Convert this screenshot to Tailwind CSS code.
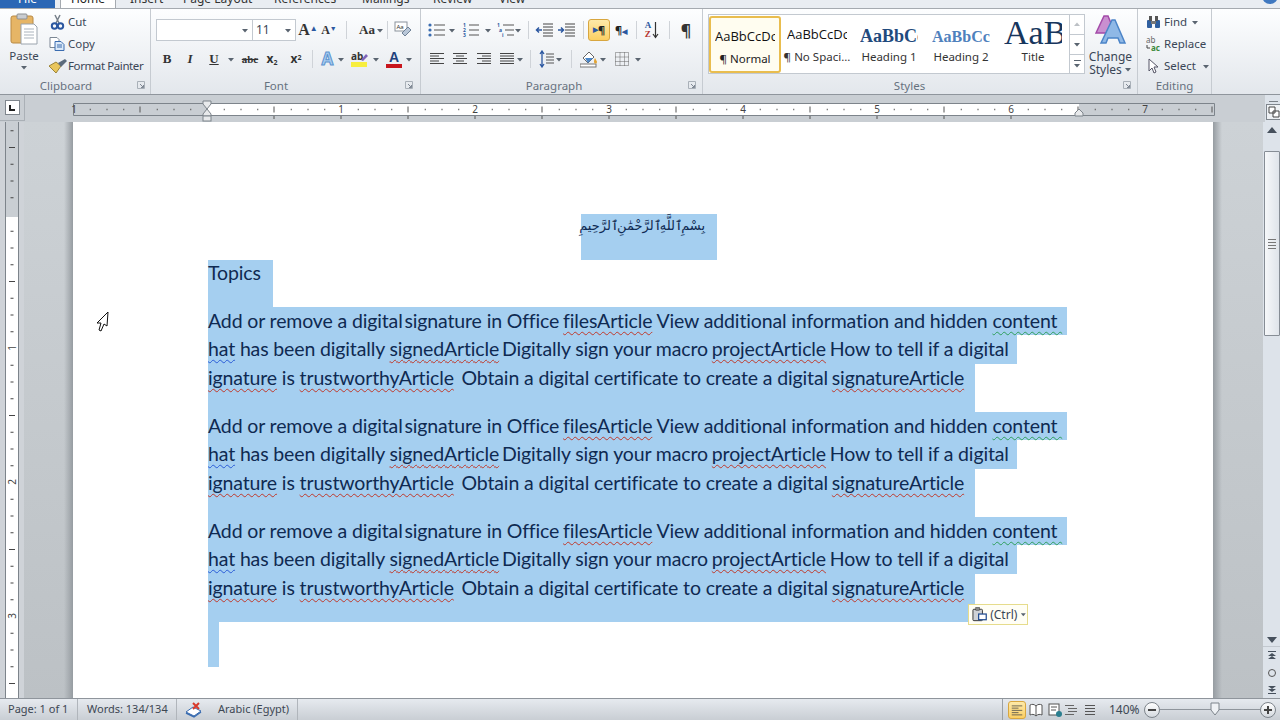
<!DOCTYPE html>
<html>
<head>
<meta charset="utf-8">
<script src="https://cdn.jsdelivr.net/npm/@tailwindcss/browser@4"></script>
</head>
<body class="w-[1280px] h-[720px] overflow-hidden bg-[#c9ced3] font-['Noto_Sans',sans-serif] text-[11.5px] text-[#3a4656] relative">
<svg width="0" height="0" class="absolute">
  <symbol id="drop" viewBox="0 0 8 5"><path d="M1 1h6L4 4.5z" fill="#5a6470"/></symbol>
  <symbol id="launch" viewBox="0 0 9 9"><path d="M.5.5h7v7h-7z" fill="none" stroke="#a9b0b8"/><path d="M3 3l3.5 3.5M6.5 4v2.5H4" stroke="#7f8894" fill="none"/></symbol>
  <symbol id="lines" viewBox="0 0 16 16"><path d="M1 2.5h14M1 5.5h9M1 8.5h14M1 11.5h9M1 14.5h14" stroke="#444" fill="none"/></symbol>
</svg>

<!-- tabs strip -->
<div class="h-[9px] flex items-end bg-[#e9edf2] border-b border-[#a5aab0] overflow-hidden relative text-[12px]">
  <div class="w-[55px] h-[9px] bg-[#2b67b5] text-white flex items-end justify-center leading-[12px] overflow-hidden"><span class="mb-[3px]">File</span></div>
  <div class="ml-[5px] w-[56px] h-[10px] bg-white border-x border-[#a5aab0] flex items-end justify-center leading-[12px] overflow-hidden text-[#222]"><span class="mb-[3px]">Home</span></div>
  <div class="absolute left-[130px] bottom-[3px] leading-[12px] text-[#333]">Insert</div>
  <div class="absolute left-[183px] bottom-[3px] leading-[12px] text-[#333]">Page Layout</div>
  <div class="absolute left-[274px] bottom-[3px] leading-[12px] text-[#333]">References</div>
  <div class="absolute left-[362px] bottom-[3px] leading-[12px] text-[#333]">Mailings</div>
  <div class="absolute left-[433px] bottom-[3px] leading-[12px] text-[#333]">Review</div>
  <div class="absolute left-[499px] bottom-[3px] leading-[12px] text-[#333]">View</div>
  <div class="absolute left-[1262px] top-[-12px] w-[16px] h-[16px] rounded-full bg-[#3f78c0]"></div>
</div>

<!-- ribbon -->
<div class="h-[86px] flex bg-linear-to-b from-[#fdfeff] to-[#e3e7ec] border-b border-[#8f959c]">

  <!-- Clipboard -->
  <div class="w-[151px] shrink-0 h-full border-r border-[#c6cbd1] relative">
    <div class="h-[69px] flex">
      <div class="w-[48px] flex flex-col items-center pt-[4px]">
        <svg width="28" height="32" viewBox="0 0 28 32">
          <rect x="1" y="3" width="22" height="27" rx="2" fill="#e6b566" stroke="#b98a45"/>
          <rect x="7" y="1" width="10" height="5" rx="1" fill="#c9ccd0" stroke="#8d8f92"/>
          <path d="M11 11h13l3 3v17H11z" fill="#fff" stroke="#9aa3ad"/>
          <path d="M14 16h10M14 19h10M14 22h10M14 25h10" stroke="#aab3bd"/>
        </svg>
        <div class="mt-[4px] leading-[14px]">Paste</div>
        <svg width="8" height="5" class="mt-[2px]"><use href="#drop"/></svg>
      </div>
      <div class="flex flex-col pt-[2px]">
        <div class="h-[22px] flex items-center">
          <svg width="16" height="16" viewBox="0 0 16 16" class="ml-[2px]"><path d="M5 1l4 8M10 1L6 9" stroke="#77808a" stroke-width="1.5"/><circle cx="4.5" cy="12" r="2.7" fill="none" stroke="#2b57a0" stroke-width="2"/><circle cx="10.5" cy="12" r="2.7" fill="none" stroke="#2b57a0" stroke-width="2"/></svg>
          <span class="ml-[2px]">Cut</span>
        </div>
        <div class="h-[22px] flex items-center">
          <svg width="16" height="16" viewBox="0 0 16 16" class="ml-[1px]"><path d="M1 1.5h7l2 2v8H1z" fill="#fff" stroke="#7c8794"/><path d="M6 5.5h6l3 3v6H6z" fill="#dbe9f8" stroke="#3a6cb0"/><path d="M8 9h5M8 11h5" stroke="#3a6cb0"/></svg>
          <span class="ml-[3px]">Copy</span>
        </div>
        <div class="h-[22px] flex items-center">
          <svg width="20" height="16" viewBox="0 0 20 16"><path d="M1 8l7 7 5-7-5-4z" fill="#e9c65d" stroke="#9c8437"/><path d="M10 5l7-4 2 2-6 6z" fill="#5b6b7c"/></svg>
          <span class="tracking-[-0.4px]">Format Painter</span>
        </div>
      </div>
    </div>
    <div class="h-[15px] pr-[18px] text-center leading-[15px] text-[#66717e]">Clipboard</div>
    <svg width="9" height="9" class="absolute left-[137px] bottom-[4px]"><use href="#launch"/></svg>
  </div>

  <!-- Font -->
  <div class="w-[270px] shrink-0 h-full border-r border-[#c6cbd1] relative pl-[5px]">
    <div class="h-[69px] pt-[10px]">
      <div class="flex items-center h-[22px]">
        <div class="w-[97px] h-[22px] border border-[#c3c9d0] bg-white flex items-center justify-end pr-[3px]"><svg width="8" height="5"><use href="#drop"/></svg></div>
        <div class="w-[43px] h-[22px] border border-l-0 border-[#c3c9d0] bg-white flex items-center justify-between px-[3px] text-[12px]"><span>11</span><svg width="8" height="5"><use href="#drop"/></svg></div>
        <div class="ml-[2px] w-[20px] text-center font-['Liberation_Serif',serif] font-bold text-[16px] text-[#333] leading-[20px]">A<sup class="text-[8px] text-[#2b57a0]">▲</sup></div>
        <div class="ml-[1px] w-[20px] text-center font-['Liberation_Serif',serif] font-bold text-[12px] text-[#333] leading-[20px]">A<sup class="text-[7px] text-[#2b57a0]">▼</sup></div>
        <div class="ml-[7px] w-px h-[18px] bg-[#cfd3d8]"></div>
        <div class="ml-[8px] w-[20px] text-right font-['Liberation_Serif',serif] font-bold text-[13px] text-[#333]">Aa</div>
        <svg width="8" height="5" class="ml-[1px]"><use href="#drop"/></svg>
        <div class="ml-[3px] w-px h-[18px] bg-[#cfd3d8]"></div>
        <svg width="18" height="18" viewBox="0 0 18 18" class="ml-[6px]"><rect x="1" y="1" width="12" height="9" fill="#fff" stroke="#8a929b"/><text x="2.5" y="8" font-size="6" fill="#333">Aa</text><path d="M8 12l6-6 3 3-6 6z" fill="#b9c7d8" stroke="#6f8196"/></svg>
      </div>
      <div class="flex items-center h-[22px] mt-[7px] text-[#333]">
        <div class="w-[22px] text-center font-['Liberation_Serif',serif] font-bold text-[13px]">B</div>
        <div class="ml-[1px] w-[22px] text-center font-['Liberation_Serif',serif] font-bold italic text-[13px]">I</div>
        <div class="ml-[2px] w-[22px] text-center font-['Liberation_Serif',serif] font-bold underline text-[13px]">U</div>
        <div class="w-[12px] flex justify-center"><svg width="8" height="5"><use href="#drop"/></svg></div>
        <div class="ml-[2px] w-[22px] text-center font-['Liberation_Serif',serif] font-bold line-through text-[11px]">abc</div>
        <div class="w-[22px] text-center font-bold text-[12px]">x<sub class="text-[7px]">2</sub></div>
        <div class="ml-[2px] w-[22px] text-center font-bold text-[12px]">x<sup class="text-[7px]">2</sup></div>
        <div class="ml-[5px] w-px h-[18px] bg-[#cfd3d8]"></div>
        <div class="ml-[5px] w-[19px] text-center font-bold text-[17px] leading-[20px] text-[#a9cdf0] [-webkit-text-stroke:1px_#5d93cf]">A</div>
        <svg width="8" height="5"><use href="#drop"/></svg>
        <svg width="20" height="18" viewBox="0 0 20 18" class="ml-[4px]"><rect x="2" y="12" width="16" height="5" fill="#f7ee3e"/><text x="2" y="10" font-size="10" fill="#333" font-weight="700">ab</text><path d="M12 10l5-6 2 2-5 5z" fill="#7e63b8"/></svg>
        <svg width="8" height="5" class="ml-[3px]"><use href="#drop"/></svg>
        <div class="ml-[4px] w-[20px] flex flex-col items-center">
          <span class="font-['Liberation_Sans',sans-serif] font-bold text-[14px] leading-[13px] text-[#22417c]">A</span>
          <span class="w-[16px] h-[4px] bg-[#c8161d]"></span>
        </div>
        <svg width="8" height="5" class="ml-[1px]"><use href="#drop"/></svg>
      </div>
    </div>
    <div class="h-[15px] pr-[24px] text-center leading-[15px] text-[#66717e]">Font</div>
    <svg width="9" height="9" class="absolute left-[254px] bottom-[4px]"><use href="#launch"/></svg>
  </div>

  <!-- Paragraph -->
  <div class="w-[282px] shrink-0 h-full border-r border-[#c6cbd1] relative pl-[5px]">
    <div class="h-[69px] pt-[10px]">
      <div class="flex items-center h-[22px]">
        <svg width="20" height="16" viewBox="0 0 20 16"><path d="M8 3h11M8 8h11M8 13h11" stroke="#555" stroke-width="1.2"/><circle cx="4" cy="3" r="1.6" fill="#3a6cb0"/><circle cx="4" cy="8" r="1.6" fill="#3a6cb0"/><circle cx="4" cy="13" r="1.6" fill="#3a6cb0"/></svg>
        <svg width="8" height="5" class="ml-[2px]"><use href="#drop"/></svg>
        <svg width="20" height="16" viewBox="0 0 20 16" class="ml-[4px]"><path d="M9 3h10M9 8h10M9 13h10" stroke="#555" stroke-width="1.2"/><text x="3" y="5" font-size="5" fill="#2b57a0" font-weight="700">1</text><text x="3" y="10" font-size="5" fill="#2b57a0" font-weight="700">2</text><text x="3" y="15" font-size="5" fill="#2b57a0" font-weight="700">3</text></svg>
        <svg width="8" height="5" class="ml-[4px]"><use href="#drop"/></svg>
        <svg width="18" height="16" viewBox="0 0 18 16" class="ml-[4px]"><path d="M7 3h11M9 8h9M11 13h7" stroke="#555" stroke-width="1.2"/><text x="1" y="5" font-size="5" fill="#2b57a0" font-weight="700">1</text><text x="3" y="10" font-size="5" fill="#2b57a0" font-weight="700">a</text><text x="6" y="15" font-size="5" fill="#2b57a0" font-weight="700">i</text></svg>
        <svg width="8" height="5"><use href="#drop"/></svg>
        <div class="ml-[6px] w-px h-[18px] bg-[#cfd3d8]"></div>
        <svg width="20" height="16" viewBox="0 0 20 16" class="ml-[6px]"><path d="M8 2h10M8 5h10M8 8h10M8 11h10M8 14h10" stroke="#444"/><path d="M7 8H2M4 5.5L1.5 8 4 10.5" stroke="#2b57a0" fill="none" stroke-width="1.5"/></svg>
        <svg width="20" height="16" viewBox="0 0 20 16" class="ml-[2px]"><path d="M8 2h10M8 5h10M8 8h10M8 11h10M8 14h10" stroke="#444"/><path d="M1 8h5M4 5.5L6.5 8 4 10.5" stroke="#2b57a0" fill="none" stroke-width="1.5"/></svg>
        <div class="ml-[6px] w-px h-[18px] bg-[#cfd3d8]"></div>
        <div class="ml-[4px] w-[22px] h-[22px] rounded-[3px] border border-[#d8a63f] bg-linear-to-b from-[#fde9a8] to-[#fbcf62] flex items-center justify-center text-[11px] font-bold text-[#222]"><span class="text-[#2b57a0] text-[7px]">▶</span>¶</div>
        <div class="ml-[1px] w-[20px] text-center text-[11px] font-bold text-[#222]">¶<span class="text-[#2b57a0] text-[7px]">◀</span></div>
        <div class="ml-[5px] w-px h-[18px] bg-[#cfd3d8]"></div>
        <div class="ml-[5px] w-[20px] h-[20px] flex items-center justify-center">
          <div class="flex flex-col font-['Liberation_Serif',serif] font-bold text-[9px] leading-[9px]"><span class="text-[#2b57a0]">A</span><span class="text-[#b5342f]">Z</span></div>
          <svg width="7" height="18" viewBox="0 0 7 18" class="ml-[1px]"><path d="M3.5 1v15M1 13l2.5 3.5L6 13" stroke="#333" fill="none" stroke-width="1.2"/></svg>
        </div>
        <div class="ml-[7px] w-px h-[18px] bg-[#cfd3d8]"></div>
        <div class="ml-[6px] w-[20px] text-center font-bold text-[16px] text-[#333] leading-[20px]">¶</div>
      </div>
      <div class="flex items-center h-[22px] mt-[7px]">
        <svg width="18" height="16" viewBox="0 0 16 16" class="ml-[2px]"><path d="M1 2.5h14M1 5h9M1 7.5h14M1 10h9M1 12.5h14" stroke="#444"/></svg>
        <svg width="18" height="16" viewBox="0 0 16 16" class="ml-[5px]"><path d="M1 2.5h14M4 5h8M1 7.5h14M4 10h8M1 12.5h14" stroke="#444"/></svg>
        <svg width="18" height="16" viewBox="0 0 16 16" class="ml-[6px]"><path d="M1 2.5h14M6 5h9M1 7.5h14M6 10h9M1 12.5h14" stroke="#444"/></svg>
        <svg width="18" height="16" viewBox="0 0 16 16" class="ml-[5px]"><path d="M1 2.5h14M1 5h14M1 7.5h14M1 10h14M1 12.5h14" stroke="#444"/></svg>
        <svg width="8" height="5"><use href="#drop"/></svg>
        <div class="ml-[6px] w-px h-[18px] bg-[#cfd3d8]"></div>
        <svg width="16" height="18" viewBox="0 0 16 18" class="ml-[8px]"><path d="M3 1v16M1 4l2-3 2 3M1 14l2 3 2-3" stroke="#2b57a0" fill="none" stroke-width="1.3"/><path d="M7 4h8M7 7h8M7 10h8M7 13h8" stroke="#555"/></svg>
        <svg width="8" height="5"><use href="#drop"/></svg>
        <div class="ml-[8px] w-px h-[18px] bg-[#cfd3d8]"></div>
        <svg width="18" height="18" viewBox="0 0 18 18" class="ml-[8px]"><rect x="0" y="14" width="16" height="3" fill="#fff" stroke="#777"/><path d="M3 8l6-6 5 5-6 6z" fill="#fff" stroke="#666"/><path d="M5 8h8l-5 5z" fill="#4a86c8"/><path d="M15 8c1 2 2 3 2 4a1 1 0 01-3 0c0-1 0-2 1-4z" fill="#e3a534"/></svg>
        <svg width="8" height="5" class="ml-[1px]"><use href="#drop"/></svg>
        <svg width="14" height="14" viewBox="0 0 14 14" class="ml-[8px]"><path d="M.5.5h13v13H.5zM.5 5h13M.5 9.500h13M5 .5v13M9.500.5v13" stroke="#666" stroke-dasharray="1 1" fill="none"/></svg>
        <svg width="8" height="5" class="ml-[5px]"><use href="#drop"/></svg>
      </div>
    </div>
    <div class="h-[15px] pr-[20px] text-center leading-[15px] text-[#66717e]">Paragraph</div>
    <svg width="9" height="9" class="absolute left-[267px] bottom-[4px]"><use href="#launch"/></svg>
  </div>

  <!-- Styles -->
  <div class="w-[435px] shrink-0 h-full border-r border-[#c6cbd1] relative pl-[5px]">
    <div class="h-[69px] flex pt-[5px]">
      <div class="w-[377px] h-[60px] border border-[#c3c9d0] bg-white flex relative">
        <div class="w-[72px] h-[57px] mt-[1px] rounded-[3px] border-2 border-[#e9bd4e] bg-[#fffdf0] flex flex-col items-center overflow-hidden shrink-0">
          <div class="h-[34px] leading-[36px] text-[13px] font-['Open_Sans',sans-serif] text-[#111] whitespace-nowrap overflow-hidden w-[60px]">AaBbCcDc</div>
          <div class="leading-[14px] text-[#222]">¶ Normal</div>
        </div>
        <div class="w-[72px] flex flex-col items-center overflow-hidden shrink-0">
          <div class="h-[35px] leading-[39px] text-[13px] font-['Open_Sans',sans-serif] text-[#111] whitespace-nowrap overflow-hidden w-[60px]">AaBbCcDc</div>
          <div class="leading-[14px] text-[#333] whitespace-nowrap">¶ No Spaci...</div>
        </div>
        <div class="w-[72px] flex flex-col items-center overflow-hidden shrink-0">
          <div class="h-[35px] leading-[43px] text-[18px] font-bold font-['Liberation_Serif',serif] text-[#1f4a7d] whitespace-nowrap overflow-hidden w-[58px]">AaBbCcD</div>
          <div class="leading-[14px] text-[#333]">Heading 1</div>
        </div>
        <div class="w-[72px] flex flex-col items-center overflow-hidden shrink-0">
          <div class="h-[35px] leading-[43px] text-[16px] font-bold font-['Liberation_Serif',serif] text-[#4f81bd] whitespace-nowrap overflow-hidden w-[58px]">AaBbCc</div>
          <div class="leading-[14px] text-[#333]">Heading 2</div>
        </div>
        <div class="w-[72px] flex flex-col items-center overflow-hidden shrink-0">
          <div class="h-[35px] leading-[36px] text-[34px] font-['Liberation_Serif',serif] text-[#17365d] whitespace-nowrap overflow-hidden w-[58px]">AaBb</div>
          <div class="leading-[14px] text-[#333]">Title</div>
        </div>
        <div class="w-[15px] ml-auto border-l border-[#c3c9d0] flex flex-col shrink-0">
          <div class="h-[20px] flex items-center justify-center border-b border-[#c3c9d0]"><svg width="8" height="5" class="rotate-180 opacity-40"><use href="#drop"/></svg></div>
          <div class="h-[20px] flex items-center justify-center border-b border-[#c3c9d0]"><svg width="8" height="5"><use href="#drop"/></svg></div>
          <div class="h-[18px] flex flex-col gap-[2px] items-center justify-center"><span class="w-[7px] h-px bg-[#5a6470]"></span><svg width="8" height="5"><use href="#drop"/></svg></div>
        </div>
      </div>
      <div class="w-[50px] flex flex-col items-center pl-[1px]">
        <svg width="32" height="30" viewBox="0 0 32 30" class="mt-[1px]"><path d="M1 18L9 1h4l7 17z" fill="#c98fd0" stroke="#a34aa8" stroke-width="1.500"/><path d="M6 28L17 5h3l10 23h-5l-2-5H13l-2 5z" fill="#8fb8e6" stroke="#4b84c8" stroke-width="1.500"/></svg>
        <div class="leading-[13px] mt-[5px] text-[12px]">Change</div>
        <div class="leading-[13px] text-[12px] flex items-center gap-[2px] whitespace-nowrap">Styles <svg width="8" height="5"><use href="#drop"/></svg></div>
      </div>
    </div>
    <div class="h-[15px] pr-[26px] text-center leading-[15px] text-[#66717e]">Styles</div>
    <svg width="9" height="9" class="absolute left-[420px] bottom-[4px]"><use href="#launch"/></svg>
  </div>

  <!-- Editing -->
  <div class="w-[74px] shrink-0 h-full border-r border-[#c6cbd1]">
    <div class="h-[69px] pt-[2px] flex flex-col">
      <div class="h-[22px] flex items-center pl-[8px] gap-[3px]">
        <svg width="15" height="14" viewBox="0 0 15 14"><rect x="1" y="5" width="5" height="8" rx="1" fill="#2f5f9f"/><rect x="9" y="5" width="5" height="8" rx="1" fill="#2f5f9f"/><rect x="3" y="1" width="3" height="5" fill="#555"/><rect x="9" y="1" width="3" height="5" fill="#555"/><rect x="5" y="6" width="5" height="3" fill="#777"/></svg>
        <span>Find</span><svg width="8" height="5" class="ml-[1px]"><use href="#drop"/></svg>
      </div>
      <div class="h-[22px] flex items-center pl-[8px] gap-[3px]">
        <svg width="15" height="16" viewBox="0 0 15 16"><text x="0" y="7" font-size="8" fill="#666">ab</text><text x="5" y="15" font-size="8" font-weight="700" fill="#3b8a3b">ac</text><path d="M1 9v3h3" fill="none" stroke="#444"/></svg>
        <span>Replace</span>
      </div>
      <div class="h-[22px] flex items-center pl-[9px] gap-[5px]">
        <svg width="12" height="16" viewBox="0 0 12 16"><path d="M2 1v12l3-3 2 5 2-1-2-5h4z" fill="#fff" stroke="#556"/></svg>
        <span>Select</span><svg width="8" height="5" class="ml-[1px]"><use href="#drop"/></svg>
      </div>
    </div>
    <div class="h-[15px] text-center leading-[15px] text-[#66717e]">Editing</div>
  </div>
</div>

<!-- ruler row -->
<div class="h-[27px] flex items-start bg-[#c9ced3]">
  <div class="w-[25px] h-[26px] border-r border-b border-[#aab0b6] flex items-center justify-center shrink-0">
    <div class="w-[15px] h-[15px] border border-[#7f868d] bg-white flex items-center justify-center"><span class="w-[6px] h-[6px] border-l-2 border-b-2 border-[#222]"></span></div>
  </div>
  <svg width="1146" height="27" viewBox="0 0 1146 27" class="ml-[46px] shrink-0">
    <rect x="2.5" y="8.500" width="1141" height="11.500" fill="#c9ced3"/>
    <rect x="136" y="9" width="872" height="11" fill="#fff"/>
    <path d="M2.5 8.500h1141v12H2.500z" fill="none" stroke="#7d848b"/>
    <path d="M18.750 14.500H1143" stroke="#555" stroke-dasharray="1 15.75 1 15.75 1 32.5 1 15.75 1 15.75 1 32.5" stroke-width="1.500"/>
    <path d="M69 11.500v6M203 11.500v6M337 11.500v6M471 11.500v6M605 11.500v6M739 11.500v6M873 11.500v6M1007 11.500v6M1141 11.500v6" stroke="#555"/>
    <path d="M203 21v3M270 21v3M337 21v3M404 21v3M471 21v3M538 21v3M605 21v3M672 21v3M739 21v3M806 21v3M873 21v3M940 21v3" stroke="#555"/>
    <g font-size="10" fill="#444" text-anchor="middle" font-family="Noto Sans">
      <rect x="266" y="10" width="8" height="9" fill="#fff"/><text x="270" y="18">1</text>
      <rect x="400" y="10" width="8" height="9" fill="#fff"/><text x="404" y="18">2</text>
      <rect x="534" y="10" width="8" height="9" fill="#fff"/><text x="538" y="18">3</text>
      <rect x="668" y="10" width="8" height="9" fill="#fff"/><text x="672" y="18">4</text>
      <rect x="802" y="10" width="8" height="9" fill="#fff"/><text x="806" y="18">5</text>
      <rect x="936" y="10" width="8" height="9" fill="#fff"/><text x="940" y="18">6</text>
      <rect x="1070" y="10" width="8" height="9" fill="#c9ced3"/><text x="1074" y="18">7</text>
      <text x="3" y="18">1</text>
    </g>
    <path d="M132 6h8v3l-4 5-4-5zM136 14l4 5v2h-8v-2z" fill="#e8eaec" stroke="#7d848b"/>
    <rect x="132" y="21" width="8" height="5" fill="#e8eaec" stroke="#7d848b"/>
    <path d="M1008 14l4 4v3h-8v-3z" fill="#e8eaec" stroke="#7d848b"/>
  </svg>
  <div class="ml-[48px] w-[17px] h-[27px] bg-[#dde3ea] shrink-0 flex flex-col items-center">
    <span class="w-[9px] h-px bg-[#7a8087] mt-[6px] mb-[2px]"></span>
    <div class="w-[16px] h-[16px] border border-[#7f868d] bg-[#eef1f4] flex items-center justify-center"><svg width="12" height="12" viewBox="0 0 12 12"><path d="M1 1h6v6H1zM5 5h6v6H5z" fill="#fff" stroke="#444"/></svg></div>
  </div>
</div>

<!-- main -->
<div class="h-[576px] flex">
  <div class="w-[73px] shrink-0 flex bg-linear-to-b from-[#cdd2d6] to-[#bcc1c5]">
    <div class="w-[24px] h-full bg-[#cfd3d8] shrink-0">
      <svg width="20" height="576" viewBox="0 0 20 576" class="ml-[5px]">
        <rect x=".5" y="-1" width="13" height="578" fill="#c9ced3" stroke="#7d848b"/>
        <rect x="1" y="95" width="12" height="481" fill="#fff"/>
        <path d="M7 -25.250V576" stroke="#444" stroke-width="3" stroke-dasharray="1 15.75 1 15.75 1 32.5 1 15.75 1 15.75 1 32.5"/>
        <path d="M4 25.500h6M4 159.500h6M4 293.500h6M4 427.500h6M4 561.500h6" stroke="#444"/>
        <g font-size="10" fill="#444" text-anchor="middle" font-family="Noto Sans">
          <text transform="translate(10.500,226) rotate(-90)">1</text>
          <text transform="translate(10.500,360) rotate(-90)">2</text>
          <text transform="translate(10.500,494) rotate(-90)">3</text>
        </g>
      </svg>
    </div>
    <div class="w-[40px] shrink-0"></div>
    <div class="w-[9px] h-full bg-linear-to-r from-transparent to-[#969ca1] shrink-0"></div>
  </div>

  <!-- page -->
  <div class="w-[1140px] shrink-0 bg-white relative overflow-hidden pt-[92px] pl-[135px] font-[Lato,sans-serif] text-[19.5px] tracking-[-0.14px] text-[#0f2a52] [text-decoration-skip-ink:none]">
    <div class="ml-[373px] w-[136px] h-[46px] bg-[#a5cff0] pr-[12px] text-start tracking-normal font-['DejaVu_Sans',sans-serif] text-[13px] [word-spacing:-6px] leading-[24px] whitespace-pre" dir="rtl">بِسْمِ ٱللَّهِ ٱلرَّحْمَٰنِ ٱلرَّحِيمِ</div>
    <div class="w-[65px] h-[47px] bg-[#a5cff0] leading-[26px]">Topics</div>

    <div class="w-[859px] h-[28px] bg-[#a5cff0] leading-[28px] whitespace-pre">Add or remove a digital <span class="ml-[-3px]">signature in Office</span> <span class="ml-[-1px] underline decoration-wavy decoration-[#c0392b] decoration-[0.6px] underline-offset-3">filesArticle</span> View additional information and hidden <span class="underline decoration-wavy decoration-[#2e9e5b] decoration-[0.6px] underline-offset-3">content </span></div>
    <div class="w-[809px] h-[29px] bg-[#a5cff0] leading-[28px] whitespace-pre"><span class="underline decoration-wavy decoration-[#2a5bd7] decoration-[0.6px] underline-offset-3">hat</span> has been digitally <span class="underline decoration-wavy decoration-[#c0392b] decoration-[0.6px] underline-offset-3">signedArticle</span> <span class="ml-[-2px]">Digitally sign your macro</span> <span class="ml-[-1px] underline decoration-wavy decoration-[#c0392b] decoration-[0.6px] underline-offset-3">projectArticle</span> <span class="ml-[-1px]">How to tell if a digital</span></div>
    <div class="w-[767px] h-[48px] bg-[#a5cff0] leading-[28px] whitespace-pre"><span class="underline decoration-wavy decoration-[#c0392b] decoration-[0.6px] underline-offset-3">ignature</span> is <span class="underline decoration-wavy decoration-[#c0392b] decoration-[0.6px] underline-offset-3">trustworthyArticle</span>  <span class="ml-[-2px]">Obtain a digital certificate to create a digital</span> <span class="ml-[-1px] underline decoration-wavy decoration-[#c0392b] decoration-[0.6px] underline-offset-3">signatureArticle</span></div>

    <div class="w-[859px] h-[28px] bg-[#a5cff0] leading-[28px] whitespace-pre">Add or remove a digital <span class="ml-[-3px]">signature in Office</span> <span class="ml-[-1px] underline decoration-wavy decoration-[#c0392b] decoration-[0.6px] underline-offset-3">filesArticle</span> View additional information and hidden <span class="underline decoration-wavy decoration-[#2e9e5b] decoration-[0.6px] underline-offset-3">content </span></div>
    <div class="w-[809px] h-[29px] bg-[#a5cff0] leading-[28px] whitespace-pre"><span class="underline decoration-wavy decoration-[#2a5bd7] decoration-[0.6px] underline-offset-3">hat</span> has been digitally <span class="underline decoration-wavy decoration-[#c0392b] decoration-[0.6px] underline-offset-3">signedArticle</span> <span class="ml-[-2px]">Digitally sign your macro</span> <span class="ml-[-1px] underline decoration-wavy decoration-[#c0392b] decoration-[0.6px] underline-offset-3">projectArticle</span> <span class="ml-[-1px]">How to tell if a digital</span></div>
    <div class="w-[767px] h-[48px] bg-[#a5cff0] leading-[28px] whitespace-pre"><span class="underline decoration-wavy decoration-[#c0392b] decoration-[0.6px] underline-offset-3">ignature</span> is <span class="underline decoration-wavy decoration-[#c0392b] decoration-[0.6px] underline-offset-3">trustworthyArticle</span>  <span class="ml-[-2px]">Obtain a digital certificate to create a digital</span> <span class="ml-[-1px] underline decoration-wavy decoration-[#c0392b] decoration-[0.6px] underline-offset-3">signatureArticle</span></div>

    <div class="w-[859px] h-[28px] bg-[#a5cff0] leading-[28px] whitespace-pre">Add or remove a digital <span class="ml-[-3px]">signature in Office</span> <span class="ml-[-1px] underline decoration-wavy decoration-[#c0392b] decoration-[0.6px] underline-offset-3">filesArticle</span> View additional information and hidden <span class="underline decoration-wavy decoration-[#2e9e5b] decoration-[0.6px] underline-offset-3">content </span></div>
    <div class="w-[809px] h-[29px] bg-[#a5cff0] leading-[28px] whitespace-pre"><span class="underline decoration-wavy decoration-[#2a5bd7] decoration-[0.6px] underline-offset-3">hat</span> has been digitally <span class="underline decoration-wavy decoration-[#c0392b] decoration-[0.6px] underline-offset-3">signedArticle</span> <span class="ml-[-2px]">Digitally sign your macro</span> <span class="ml-[-1px] underline decoration-wavy decoration-[#c0392b] decoration-[0.6px] underline-offset-3">projectArticle</span> <span class="ml-[-1px]">How to tell if a digital</span></div>
    <div class="w-[767px] h-[48px] bg-[#a5cff0] leading-[28px] whitespace-pre"><span class="underline decoration-wavy decoration-[#c0392b] decoration-[0.6px] underline-offset-3">ignature</span> is <span class="underline decoration-wavy decoration-[#c0392b] decoration-[0.6px] underline-offset-3">trustworthyArticle</span>  <span class="ml-[-2px]">Obtain a digital certificate to create a digital</span> <span class="ml-[-1px] underline decoration-wavy decoration-[#c0392b] decoration-[0.6px] underline-offset-3">signatureArticle</span></div>

    <div class="w-[11px] h-[45px] bg-[#a5cff0]"></div>

    <!-- paste options -->
    <div class="absolute left-[895px] top-[482px] w-[60px] h-[21px] bg-[#fffef5] border border-[#e6dc8c] flex items-center pl-[3px] gap-[3px] font-['Noto_Sans',sans-serif] text-[12px] tracking-normal leading-[14px] text-[#3a4656]">
      <svg width="16" height="15" viewBox="0 0 16 15"><rect x="1" y="2" width="10" height="12" rx="1" fill="#cfd2d6" stroke="#333"/><rect x="4" y="0" width="4" height="3" fill="#888" stroke="#333" stroke-width=".5"/><rect x="7" y="7" width="8" height="6" fill="#fff" stroke="#1f4a8f" stroke-width="1.300"/></svg>
      <span>(Ctrl)</span><svg width="7" height="5"><use href="#drop"/></svg>
    </div>
    <!-- mouse pointer -->
    <svg width="14" height="22" viewBox="0 0 14 22" class="absolute left-[23px] top-[189px]"><path d="M12 1L1 12h4l-2 7 2 1 3-7 3 2z" fill="#fff" stroke="#111" stroke-width="1"/></svg>
  </div>

  <div class="w-[50px] shrink-0 bg-linear-to-b from-[#cdd2d6] to-[#bcc1c5]">
    <div class="w-[9px] h-full bg-linear-to-r from-[#969ca1] to-transparent"></div>
  </div>

  <!-- scrollbar -->
  <div class="w-[17px] shrink-0 bg-[#dde3ea] flex flex-col items-center">
    <svg width="10" height="6" class="mt-[5px]" viewBox="0 0 10 6"><path d="M5 0l5 6H0z" fill="#46505c"/></svg>
    <div class="mt-[18px] w-[16px] h-[185px] bg-linear-to-r from-[#f6f8fa] to-[#dfe4ea] border border-[#868d95] rounded-[1px] flex flex-col items-center justify-center gap-[2px]">
      <span class="w-[8px] h-px bg-[#777]"></span><span class="w-[8px] h-px bg-[#777]"></span><span class="w-[8px] h-px bg-[#777]"></span><span class="w-[8px] h-px bg-[#777]"></span>
    </div>
    <svg width="10" height="6" class="mt-[301px]" viewBox="0 0 10 6"><path d="M0 0h10L5 6z" fill="#46505c"/></svg>
    <div class="mt-[3px] w-full border-t border-[#c2c8cf] flex flex-col items-center">
      <div class="h-[17px] flex items-center"><svg width="8" height="9" viewBox="0 0 8 9"><path d="M4 2l4 3H0zM4 5l4 3H0z" fill="#46505c"/><path d="M0 .5h8" stroke="#46505c"/></svg></div>
      <div class="h-[17px] flex items-center"><span class="w-[8px] h-[8px] rounded-full border border-[#555]"></span></div>
      <div class="h-[17px] flex items-center"><svg width="8" height="9" viewBox="0 0 8 9"><path d="M4 4l4-3H0zM4 7l4-3H0z" fill="#46505c"/><path d="M0 8.500h8" stroke="#46505c"/></svg></div>
    </div>
  </div>
</div>

<!-- status bar -->
<div class="h-[22px] flex items-center bg-linear-to-b from-[#e6eaef] to-[#c9ced4] border-t border-[#8f959c] text-[11px] text-[#3d4753] whitespace-nowrap">
  <span class="ml-[8px] w-[69px]">Page: 1 of 1</span>
  <span class="w-px h-full bg-[#b0b5bb]"></span>
  <span class="ml-[9px] w-[89px]">Words: 134/134</span>
  <span class="w-px h-full bg-[#b0b5bb]"></span>
  <svg width="18" height="16" viewBox="0 0 18 16" class="ml-[8px]"><path d="M1 10l7-5 8 4-7 5z" fill="#fff" stroke="#3a6cb0"/><path d="M1 11l8 4 7-5" stroke="#3a6cb0" fill="none" stroke-width="1.500"/><path d="M8 1l6 6M14 1L8 7" stroke="#d8392b" stroke-width="2"/></svg>
  <span class="ml-[15px] w-[79px]">Arabic (Egypt)</span>
  <span class="w-px h-full bg-[#b0b5bb]"></span>
  <span class="ml-[704px] w-px h-full bg-[#9aa0a6]"></span>
  <div class="ml-[5px] w-[18px] h-[18px] rounded-[3px] border border-[#d8a63f] bg-linear-to-b from-[#fde9a8] to-[#fbcf62] flex items-center justify-center"><svg width="12" height="12"><use href="#lines"/></svg></div>
  <svg width="14" height="14" viewBox="0 0 14 14" class="ml-[3px]"><path d="M7 3C5 1 3 1 1 2v10c2-1 4-1 6 1 2-2 4-2 6-1V2c-2-1-4-1-6 1zM7 3v10" fill="#fff" stroke="#555"/></svg>
  <svg width="15" height="14" viewBox="0 0 15 14" class="ml-[5px]"><rect x="1" y="1" width="10" height="11" fill="#fff" stroke="#555"/><path d="M3 4h6M3 7h5" stroke="#555"/><circle cx="11" cy="11" r="3" fill="#2a7e8f"/></svg>
  <svg width="12" height="12" viewBox="0 0 12 12" class="ml-[2px]"><path d="M0 1.500h9M3 4.500h9M3 7.500h9M0 10.500h9" stroke="#666"/></svg>
  <svg width="12" height="12" viewBox="0 0 12 12" class="ml-[7px]"><path d="M1 1.500h10M1 4.500h10M1 7.500h10M1 10.500h10" stroke="#555"/></svg>
  <span class="ml-[13px] w-[35px] text-[12px]">140%</span>
  <div class="w-[16px] h-[16px] rounded-full bg-linear-to-b from-white to-[#d4d9df] border border-[#7d848b] flex items-center justify-center"><span class="w-[8px] h-[2px] bg-[#444]"></span></div>
  <div class="w-[100px] h-px bg-[#8f959c] relative"><svg width="10" height="14" viewBox="0 0 10 14" class="absolute left-[50px] top-[-7px]"><path d="M1 1h8v7l-4 5-4-5z" fill="#eef1f4" stroke="#7d848b"/></svg></div>
  <div class="w-[16px] h-[16px] rounded-full bg-linear-to-b from-white to-[#d4d9df] border border-[#7d848b] flex items-center justify-center relative"><span class="w-[8px] h-[2px] bg-[#444]"></span><span class="absolute w-[2px] h-[8px] bg-[#444]"></span></div>
</div>
</body>
</html>
